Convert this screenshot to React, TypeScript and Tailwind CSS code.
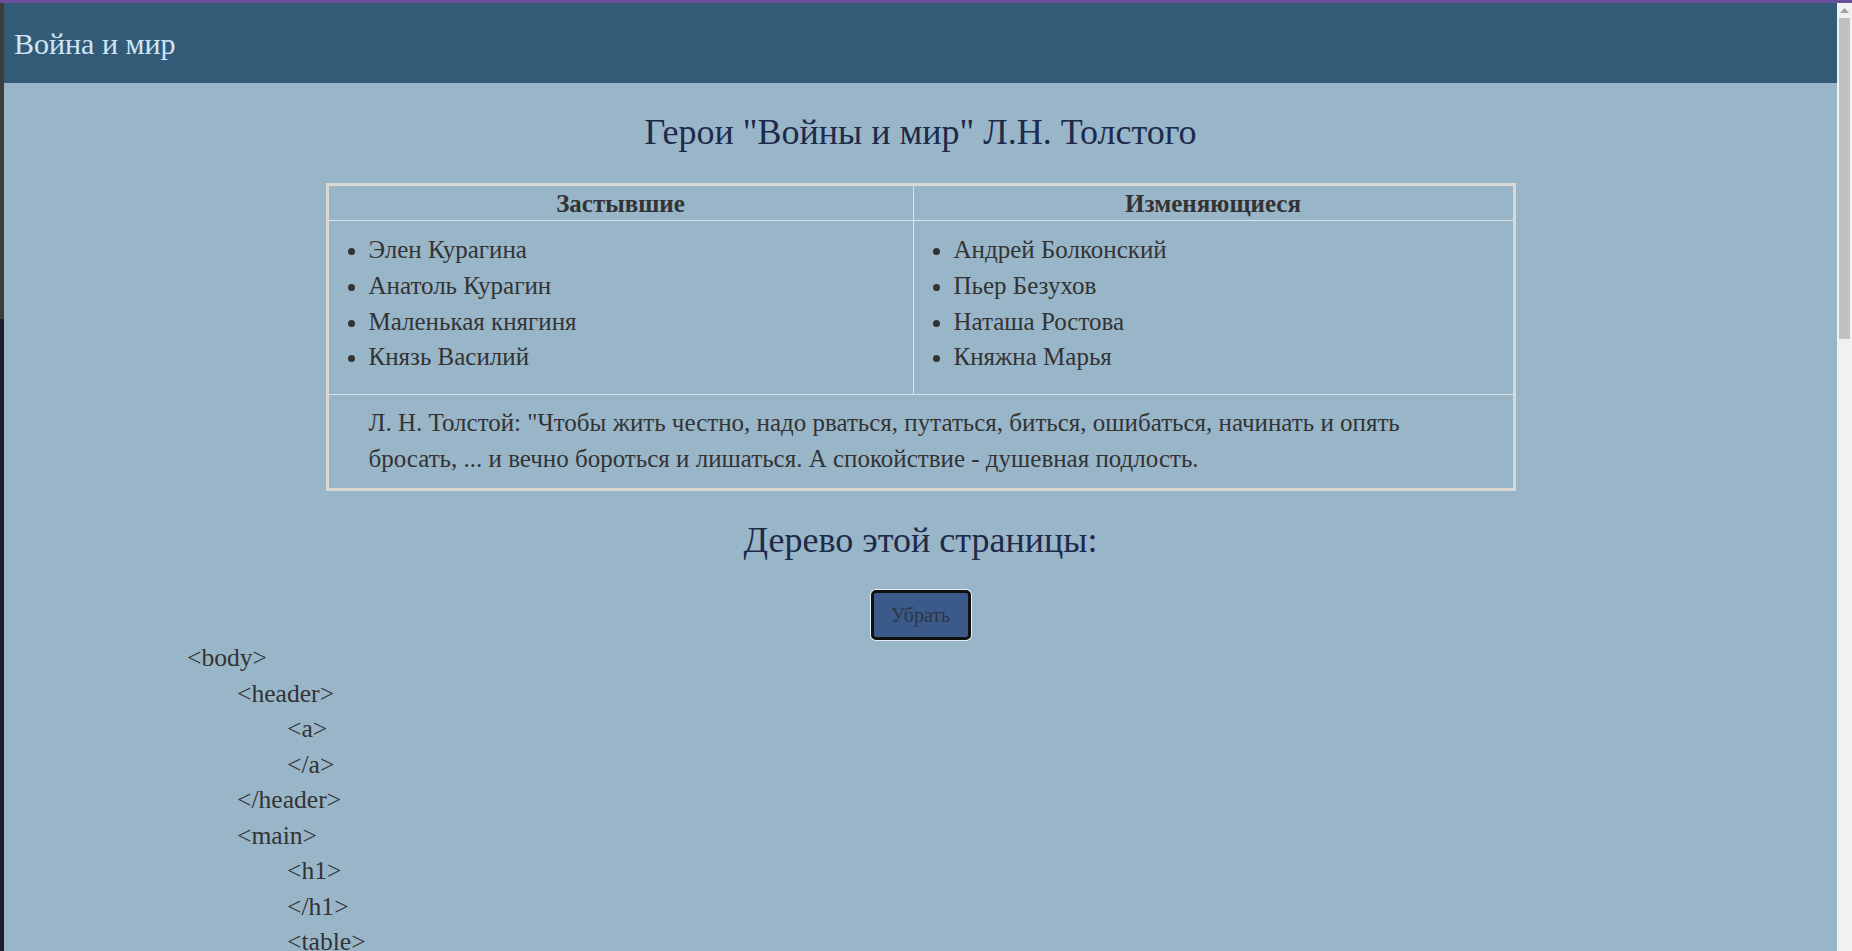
import React from "react";

const serif = { fontFamily: '"Liberation Serif", "Times New Roman", serif' };

const frozen = ["Элен Курагина", "Анатоль Курагин", "Маленькая княгиня", "Князь Василий"];
const changing = ["Андрей Болконский", "Пьер Безухов", "Наташа Ростова", "Княжна Марья"];

// page tree: [depth, tag]
const tree: [number, string][] = [
  [0, "<body>"],
  [1, "<header>"],
  [2, "<a>"],
  [2, "</a>"],
  [1, "</header>"],
  [1, "<main>"],
  [2, "<h1>"],
  [2, "</h1>"],
  [2, "<table>"],
];

const indent = ["pl-0", "pl-[50px]", "pl-[100px]", "pl-[150px]", "pl-[200px]"];

function NameList({ items }: { items: string[] }) {
  return (
    <ul className="list-disc pl-[40px] pt-[11px] pb-[19px] text-[25px] leading-[35.8px] marker:text-[#333]">
      {items.map((n) => (
        <li key={n}>{n}</li>
      ))}
    </ul>
  );
}

function Scrollbar() {
  return (
    <div className="flex w-[15px] shrink-0 flex-col bg-[#f1f1f1]">
      <div className="flex h-[15px] items-center justify-center">
        <svg width="9" height="5" viewBox="0 0 9 5">
          <path d="M4.5 0 9 5H0z" fill="#a3a3a3" />
        </svg>
      </div>
      <div className="mx-[2px] h-[321px] bg-[#c1c1c1]" />
    </div>
  );
}

export default function App() {
  return (
    <div className="flex h-[951px] w-full flex-col overflow-hidden bg-[#99b6c9]" style={serif}>
      <div className="h-[3px] shrink-0 bg-[#6a4f9d]" />
      <div className="flex min-h-0 flex-1">
        <div className="flex w-[4px] shrink-0 flex-col">
          <div className="h-[316px] bg-[#3c3c3c]" />
          <div className="flex-1 bg-[#1b1f2b]" />
        </div>

        <div className="flex min-w-0 flex-1 flex-col">
          <header className="flex h-[80px] shrink-0 items-center bg-[#335b78] px-[10px] pt-[1px]">
            <a className="text-[30px] leading-none text-[#cde6f7]">Война и мир</a>
          </header>

          <main className="flex flex-col text-[#333]">
            <h1 className="mt-[28px] text-center text-[36px] leading-[42px] text-[#1e2a4a]">
              Герои "Войны и мир" Л.Н. Толстого
            </h1>

            <div className="mx-auto mt-[30px] w-[1190px] border-[3px] border-[#dcd9d4]">
              <div className="grid grid-cols-[585px_1fr]">
                <div className="border-b border-r border-[#d9e3ea] pt-[1px] text-center text-[25px] font-bold leading-[33px]">
                  Застывшие
                </div>
                <div className="border-b border-[#d9e3ea] pt-[1px] text-center text-[25px] font-bold leading-[33px]">
                  Изменяющиеся
                </div>
                <div className="border-b border-r border-[#d9e3ea]">
                  <NameList items={frozen} />
                </div>
                <div className="border-b border-[#d9e3ea]">
                  <NameList items={changing} />
                </div>
              </div>
              <blockquote className="mx-[40px] pt-[10px] pb-[11px] text-[25px] leading-[36px]">
                Л. Н. Толстой: "Чтобы жить честно, надо рваться, путаться, биться, ошибаться, начинать и опять
                бросать, ... и вечно бороться и лишаться. А спокойствие - душевная подлость.
              </blockquote>
            </div>

            <h2 className="mt-[28px] text-center text-[36px] leading-[42px] text-[#1e2a4a]">
              Дерево этой страницы:
            </h2>

            <div className="mt-[29px] flex justify-center">
              <button className="h-[50px] w-[100px] rounded-[5px] border-[3px] border-[#111] bg-[#3b5a8a] text-[20px] text-[#2d3646] shadow-[0_0_0_1px_#e4ecf7]">
                Убрать
              </button>
            </div>

            <div className="pl-[183px] text-[25.6px] leading-[35.5px]">
              {tree.map(([d, t], i) => (
                <div key={i} className={indent[d]}>
                  {t}
                </div>
              ))}
            </div>
          </main>
        </div>

        <Scrollbar />
      </div>
    </div>
  );
}
